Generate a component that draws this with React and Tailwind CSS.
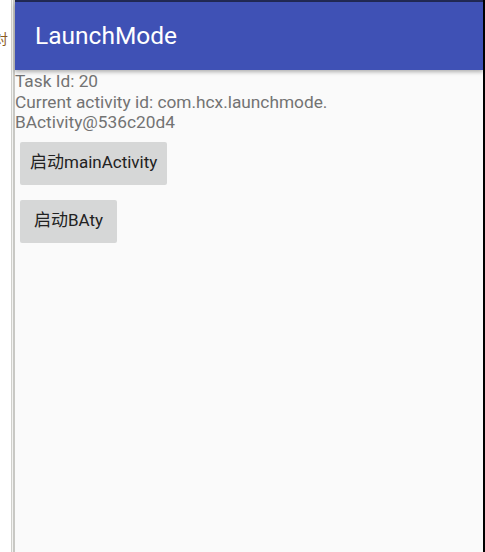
export default function App() {
  return (
    <div className="flex h-[552px] w-[485px] overflow-hidden bg-white" style={{ fontFamily: 'Roboto, "Noto Sans CJK SC", sans-serif' }}>
      <div className="relative h-full w-[11px] overflow-hidden bg-white">
        <span className="absolute left-[-6px] top-[30px] text-[14px] leading-[16px] text-[#8a5a1e]" style={{ fontFamily: '"Noto Sans CJK SC", sans-serif' }}>对</span>
      </div>
      <div className="h-full w-[1px] bg-[#cfcfcb]" />
      <div className="h-full w-[1px] bg-[#f2f2f0]" />
      <div className="h-full w-[2px] bg-[#c8c8c4]" />
      <div className="flex h-full flex-1 flex-col bg-[#fafafa]">
        <div className="h-[2px] bg-[#222a55]" />
        <div className="relative z-10 flex h-[68px] items-center bg-[#3f51b5] pl-[20px] shadow-[0_2px_4px_rgba(0,0,0,0.3)]">
          <span className="text-[24.5px] leading-[28px] text-white">LaunchMode</span>
        </div>
        <div className="flex flex-col pt-[1px] text-[17.3px] leading-[20.5px] text-[#737373]">
          <span>Task Id: 20</span>
          <span>Current activity id: com.hcx.launchmode.</span>
          <span>BActivity@536c20d4</span>
        </div>
        <div className="mt-[9px] flex flex-col items-start gap-[15px] pl-[5px]">
          <div className="flex h-[43px] items-center rounded-[2px] bg-[#d6d7d7] px-[10px] text-[17px] text-[#222]">启动mainActivity</div>
          <div className="flex h-[43px] items-center rounded-[2px] bg-[#d6d7d7] px-[14px] text-[17px] text-[#222]">启动BAty</div>
        </div>
      </div>
      <div className="h-full w-[2px] bg-black" />
    </div>
  );
}
